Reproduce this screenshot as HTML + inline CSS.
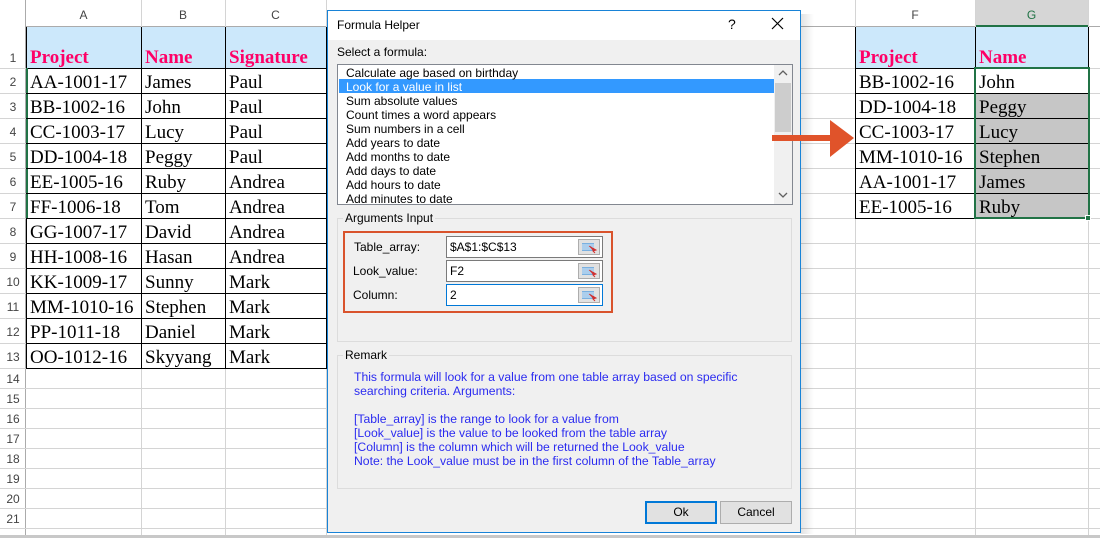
<!DOCTYPE html>
<html><head><meta charset="utf-8"><style>
*{margin:0;padding:0;box-sizing:border-box}
body{width:1100px;height:538px;overflow:hidden;background:#fff;position:relative;font-family:"Liberation Sans",sans-serif}
.a{position:absolute}
.h{position:absolute;left:0;width:1100px;height:1px;background:#d4d4d4}
.v{position:absolute;top:0;height:538px;width:1px;background:#d4d4d4}
.ch{position:absolute;top:0;height:27px;line-height:30px;text-align:center;font-size:12px;color:#444;background:#fff;border-bottom:1px solid #ababab}
.rn{position:absolute;left:0;width:26px;text-align:center;font-size:12px;color:#444}
.c{position:absolute;font-family:"Liberation Serif",serif;font-size:19px;color:#000;white-space:nowrap;line-height:25px;margin-top:1px}
.hd{font-weight:bold;color:#ff0066}
.dl{font-size:12px;color:#000;position:absolute;white-space:nowrap}
.li{position:absolute;left:8px;font-size:12px;line-height:14px;white-space:nowrap}
.inp{position:absolute;left:446px;width:157px;height:22px;background:#fff;border:1px solid #7a7a7a;font-size:12px;padding:3px 3px}
.btn{position:absolute;right:2px;top:2px;width:22px;height:16px;background:#e1e1e1;border:1px solid #adadad}
.rm{position:absolute;left:354px;font-size:12.2px;color:#2b2bf0;white-space:nowrap}
</style></head><body>
<div class="a" style="left:0;top:0;width:1100px;height:27px;background:#fff;border-bottom:1px solid #ababab"></div>
<div class="a" style="left:0;top:0;width:26px;height:538px;background:#fff;border-right:1px solid #ababab"></div>
<div class="ch" style="left:26px;width:115px">A</div>
<div class="ch" style="left:141px;width:84px">B</div>
<div class="ch" style="left:225px;width:101px">C</div>
<div class="ch" style="left:855px;width:120px">F</div>
<div class="ch" style="left:975px;width:113px;background:#d6d6d6;color:#217346;border-bottom:2px solid #217346">G</div>
<div class="h" style="top:68px"></div><div class="h" style="top:93px"></div><div class="h" style="top:118px"></div><div class="h" style="top:143px"></div><div class="h" style="top:168px"></div><div class="h" style="top:193px"></div><div class="h" style="top:218px"></div><div class="h" style="top:243px"></div><div class="h" style="top:268px"></div><div class="h" style="top:293px"></div><div class="h" style="top:318px"></div><div class="h" style="top:343px"></div><div class="h" style="top:368px"></div><div class="h" style="top:388px"></div><div class="h" style="top:408px"></div><div class="h" style="top:428px"></div><div class="h" style="top:448px"></div><div class="h" style="top:468px"></div><div class="h" style="top:488px"></div><div class="h" style="top:508px"></div><div class="h" style="top:528px"></div>
<div class="v" style="left:141px"></div><div class="v" style="left:225px"></div><div class="v" style="left:326px"></div><div class="v" style="left:855px"></div><div class="v" style="left:975px"></div><div class="v" style="left:1088px"></div>
<div class="a" style="left:0;top:535px;width:1100px;height:3px;background:#c8c8c8"></div>
<div class="rn" style="top:51px">1</div><div class="rn" style="top:75px">2</div><div class="rn" style="top:100px">3</div><div class="rn" style="top:125px">4</div><div class="rn" style="top:150px">5</div><div class="rn" style="top:175px">6</div><div class="rn" style="top:200px">7</div><div class="rn" style="top:225px">8</div><div class="rn" style="top:250px">9</div><div class="rn" style="top:275px">10</div><div class="rn" style="top:300px">11</div><div class="rn" style="top:325px">12</div><div class="rn" style="top:350px">13</div><div class="rn" style="top:372px">14</div><div class="rn" style="top:392px">15</div><div class="rn" style="top:412px">16</div><div class="rn" style="top:432px">17</div><div class="rn" style="top:452px">18</div><div class="rn" style="top:472px">19</div><div class="rn" style="top:492px">20</div><div class="rn" style="top:512px">21</div>
<div class="a" style="left:26px;top:27px;width:300px;height:41px;background:#cce8fb"></div>
<div class="a" style="left:26px;top:27px;width:301px;height:342px;border:1px solid #000;border-top:none"></div>
<div class="a" style="left:26px;top:68px;width:301px;height:1px;background:#000"></div>
<div class="a" style="left:26px;top:68px;width:2px;height:150px;background:#217346"></div>
<div class="a" style="left:141px;top:27px;width:1px;height:342px;background:#000"></div>
<div class="a" style="left:225px;top:27px;width:1px;height:342px;background:#000"></div>
<div class="a" style="left:26px;top:93px;width:301px;height:1px;background:#000"></div><div class="a" style="left:26px;top:118px;width:301px;height:1px;background:#000"></div><div class="a" style="left:26px;top:143px;width:301px;height:1px;background:#000"></div><div class="a" style="left:26px;top:168px;width:301px;height:1px;background:#000"></div><div class="a" style="left:26px;top:193px;width:301px;height:1px;background:#000"></div><div class="a" style="left:26px;top:218px;width:301px;height:1px;background:#000"></div><div class="a" style="left:26px;top:243px;width:301px;height:1px;background:#000"></div><div class="a" style="left:26px;top:268px;width:301px;height:1px;background:#000"></div><div class="a" style="left:26px;top:293px;width:301px;height:1px;background:#000"></div><div class="a" style="left:26px;top:318px;width:301px;height:1px;background:#000"></div><div class="a" style="left:26px;top:343px;width:301px;height:1px;background:#000"></div>
<div class="c hd" style="left:30px;top:44px">Project</div><div class="c hd" style="left:145px;top:44px">Name</div><div class="c hd" style="left:229px;top:44px">Signature</div>
<div class="c" style="left:30px;top:69px">AA-1001-17</div><div class="c" style="left:145px;top:69px">James</div><div class="c" style="left:229px;top:69px">Paul</div>
<div class="c" style="left:30px;top:94px">BB-1002-16</div><div class="c" style="left:145px;top:94px">John</div><div class="c" style="left:229px;top:94px">Paul</div>
<div class="c" style="left:30px;top:119px">CC-1003-17</div><div class="c" style="left:145px;top:119px">Lucy</div><div class="c" style="left:229px;top:119px">Paul</div>
<div class="c" style="left:30px;top:144px">DD-1004-18</div><div class="c" style="left:145px;top:144px">Peggy</div><div class="c" style="left:229px;top:144px">Paul</div>
<div class="c" style="left:30px;top:169px">EE-1005-16</div><div class="c" style="left:145px;top:169px">Ruby</div><div class="c" style="left:229px;top:169px">Andrea</div>
<div class="c" style="left:30px;top:194px">FF-1006-18</div><div class="c" style="left:145px;top:194px">Tom</div><div class="c" style="left:229px;top:194px">Andrea</div>
<div class="c" style="left:30px;top:219px">GG-1007-17</div><div class="c" style="left:145px;top:219px">David</div><div class="c" style="left:229px;top:219px">Andrea</div>
<div class="c" style="left:30px;top:244px">HH-1008-16</div><div class="c" style="left:145px;top:244px">Hasan</div><div class="c" style="left:229px;top:244px">Andrea</div>
<div class="c" style="left:30px;top:269px">KK-1009-17</div><div class="c" style="left:145px;top:269px">Sunny</div><div class="c" style="left:229px;top:269px">Mark</div>
<div class="c" style="left:30px;top:294px">MM-1010-16</div><div class="c" style="left:145px;top:294px">Stephen</div><div class="c" style="left:229px;top:294px">Mark</div>
<div class="c" style="left:30px;top:319px">PP-1011-18</div><div class="c" style="left:145px;top:319px">Daniel</div><div class="c" style="left:229px;top:319px">Mark</div>
<div class="c" style="left:30px;top:344px">OO-1012-16</div><div class="c" style="left:145px;top:344px">Skyyang</div><div class="c" style="left:229px;top:344px">Mark</div>
<div class="a" style="left:855px;top:27px;width:233px;height:41px;background:#cce8fb"></div>
<div class="a" style="left:976px;top:94px;width:112px;height:124px;background:#c6c6c6"></div>
<div class="a" style="left:855px;top:27px;width:234px;height:192px;border:1px solid #000;border-top:none"></div>
<div class="a" style="left:975px;top:27px;width:1px;height:192px;background:#000"></div>
<div class="a" style="left:855px;top:68px;width:234px;height:1px;background:#000"></div><div class="a" style="left:855px;top:93px;width:234px;height:1px;background:#000"></div><div class="a" style="left:855px;top:118px;width:234px;height:1px;background:#000"></div><div class="a" style="left:855px;top:143px;width:234px;height:1px;background:#000"></div><div class="a" style="left:855px;top:168px;width:234px;height:1px;background:#000"></div><div class="a" style="left:855px;top:193px;width:234px;height:1px;background:#000"></div>
<div class="a" style="left:974px;top:67px;width:116px;height:152px;border:2px solid #217346"></div>
<div class="a" style="left:1085px;top:215px;width:6px;height:6px;background:#217346;border:1px solid #fff"></div>
<div class="c hd" style="left:859px;top:44px">Project</div><div class="c hd" style="left:979px;top:44px">Name</div>
<div class="c" style="left:859px;top:69px">BB-1002-16</div><div class="c" style="left:979px;top:69px">John</div>
<div class="c" style="left:859px;top:94px">DD-1004-18</div><div class="c" style="left:979px;top:94px">Peggy</div>
<div class="c" style="left:859px;top:119px">CC-1003-17</div><div class="c" style="left:979px;top:119px">Lucy</div>
<div class="c" style="left:859px;top:144px">MM-1010-16</div><div class="c" style="left:979px;top:144px">Stephen</div>
<div class="c" style="left:859px;top:169px">AA-1001-17</div><div class="c" style="left:979px;top:169px">James</div>
<div class="c" style="left:859px;top:194px">EE-1005-16</div><div class="c" style="left:979px;top:194px">Ruby</div>
<div class="a" style="left:800px;top:14px;width:14px;height:520px;background:linear-gradient(90deg,rgba(0,0,0,.12),rgba(0,0,0,0))"></div>
<div class="a" style="left:327px;top:10px;width:474px;height:523px;background:#f0f0f0;border:1px solid #1883d7"></div>
<div class="a" style="left:328px;top:11px;width:472px;height:29px;background:#fff"></div>
<div class="dl" style="left:337px;top:18px">Formula Helper</div>
<div class="dl" style="left:728px;top:16px;font-size:14px">?</div>
<svg class="a" style="left:771px;top:17px" width="13" height="13"><path d="M1 1L12 12M12 1L1 12" stroke="#000" stroke-width="1.2"/></svg>
<div class="dl" style="left:337px;top:45px">Select a formula:</div>
<div class="a" style="left:337px;top:64px;width:456px;height:141px;background:#fff;border:1px solid #828790;overflow:hidden">
<div class="a" style="left:1px;top:14px;width:435px;height:14px;background:#3399ff"></div>
<div class="li" style="top:1px">Calculate age based on birthday</div>
<div class="li" style="top:15px;color:#fff">Look for a value in list</div>
<div class="li" style="top:29px">Sum absolute values</div>
<div class="li" style="top:43px">Count times a word appears</div>
<div class="li" style="top:57px">Sum numbers in a cell</div>
<div class="li" style="top:71px">Add years to date</div>
<div class="li" style="top:85px">Add months to date</div>
<div class="li" style="top:99px">Add days to date</div>
<div class="li" style="top:113px">Add hours to date</div>
<div class="li" style="top:127px">Add minutes to date</div>
<div class="a" style="left:436px;top:0;width:18px;height:139px;background:#f0f0f0"></div>
<div class="a" style="left:437px;top:18px;width:16px;height:49px;background:#cdcdcd"></div>
<svg class="a" style="left:440px;top:5px" width="10" height="6"><path d="M1 5L5 1L9 5" stroke="#606060" fill="none" stroke-width="1.3"/></svg>
<svg class="a" style="left:440px;top:127px" width="10" height="6"><path d="M1 1L5 5L9 1" stroke="#606060" fill="none" stroke-width="1.3"/></svg>
</div>
<div class="a" style="left:337px;top:218px;width:455px;height:124px;border:1px solid #dcdcdc"></div>
<div class="dl" style="left:343px;top:211px;background:#f0f0f0;padding:0 2px">Arguments Input</div>
<div class="a" style="left:343px;top:231px;width:270px;height:82px;border:2px solid #d9532c"></div>
<div class="dl" style="left:354px;top:240px">Table_array:</div>
<div class="dl" style="left:353px;top:264px">Look_value:</div>
<div class="dl" style="left:353px;top:288px">Column:</div>
<div class="inp" style="top:236px">$A$1:$C$13<div class="btn"><svg width="20" height="14"><rect x="3" y="3" width="12" height="8" fill="#7ab0e0"/><path d="M3 5H15M3 7H15M3 9H15" stroke="#fff" stroke-width=".7"/><path d="M10 6L17 10L14 11L16 13" fill="#d03030" stroke="#d03030"/></svg></div></div>
<div class="inp" style="top:260px">F2<div class="btn"><svg width="20" height="14"><rect x="3" y="3" width="12" height="8" fill="#7ab0e0"/><path d="M3 5H15M3 7H15M3 9H15" stroke="#fff" stroke-width=".7"/><path d="M10 6L17 10L14 11L16 13" fill="#d03030" stroke="#d03030"/></svg></div></div>
<div class="inp" style="top:284px;border-color:#0078d7">2<div class="btn"><svg width="20" height="14"><rect x="3" y="3" width="12" height="8" fill="#7ab0e0"/><path d="M3 5H15M3 7H15M3 9H15" stroke="#fff" stroke-width=".7"/><path d="M10 6L17 10L14 11L16 13" fill="#d03030" stroke="#d03030"/></svg></div></div>
<div class="a" style="left:337px;top:355px;width:455px;height:134px;border:1px solid #dcdcdc"></div>
<div class="dl" style="left:343px;top:348px;background:#f0f0f0;padding:0 2px">Remark</div>
<div class="rm" style="top:370px">This formula will look for a value from one table array based on specific</div>
<div class="rm" style="top:384px">searching criteria. Arguments:</div>
<div class="rm" style="top:412px">[Table_array] is the range to look for a value from</div>
<div class="rm" style="top:426px">[Look_value] is the value to be looked from the table array</div>
<div class="rm" style="top:440px">[Column] is the column which will be returned the Look_value</div>
<div class="rm" style="top:454px">Note: the Look_value must be in the first column of the Table_array</div>
<div class="a" style="left:645px;top:501px;width:72px;height:23px;background:#e1e1e1;border:2px solid #0078d7;font-size:12px;text-align:center;line-height:19px">Ok</div>
<div class="a" style="left:720px;top:501px;width:72px;height:23px;background:#e1e1e1;border:1px solid #adadad;font-size:12px;text-align:center;line-height:21px">Cancel</div>
<svg class="a" style="left:770px;top:118px" width="86" height="42"><path d="M2 17H60V2L84 20L60 39V23H2Z" fill="#e0532a"/></svg>
</body></html>
